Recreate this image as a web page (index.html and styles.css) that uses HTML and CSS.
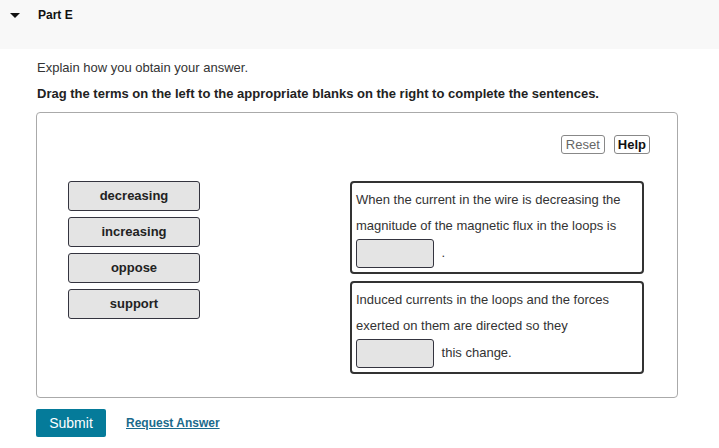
FILE: index.html
```html
<!DOCTYPE html>
<html lang="en">
<head>
    <meta charset="UTF-8">
    <title>Part E</title>
    <link rel="stylesheet" href="styles.css">
</head>
<body>
    <div class="part-header">
        <span class="caret"></span>
        <span class="part-title">Part E</span>
    </div>

    <div class="part-body">
        <p class="prompt">Explain how you obtain your answer.</p>
        <p class="instructions">Drag the terms on the left to the appropriate blanks on the right to complete the sentences.</p>

        <div class="dnd-box">
            <div class="toolbar">
                <button class="tool-btn reset">Reset</button>
                <button class="tool-btn help">Help</button>
            </div>
            <div class="dnd-area">
                <!-- draggable terms -->
                <div class="terms">
                    <div class="term">decreasing</div>
                    <div class="term">increasing</div>
                    <div class="term">oppose</div>
                    <div class="term">support</div>
                </div>
                <!-- sentences with drop targets -->
                <div class="sentences">
                    <div class="sentence">
                        When the current in the wire is decreasing the magnitude of the magnetic flux in the loops is
                        <span class="blank"></span> .
                    </div>
                    <div class="sentence">
                        Induced currents in the loops and the forces exerted on them are directed so they
                        <span class="blank"></span> this change.
                    </div>
                </div>
            </div>
        </div>

        <div class="actions">
            <button class="submit">Submit</button>
            <a href="#" class="request">Request Answer</a>
        </div>
    </div>
</body>
</html>
```

FILE: styles.css
```css
body {
    margin: 0;
    padding: 0;
    font-family: Arial, "Liberation Sans", sans-serif;
    color: #222;
    background: #fff;
}
.part-header {
    height: 49px;
    background-color: #f8f8f8;
    display: flex;
    align-items: flex-start;
    padding-top: 8px;
    box-sizing: border-box;
}
.caret {
    width: 0;
    height: 0;
    border-left: 5px solid transparent;
    border-right: 5px solid transparent;
    border-top: 5px solid #111;
    margin: 5px 0 0 10px;
}
.part-title {
    font-size: 12px;
    font-weight: bold;
    color: #111;
    margin-left: 18px;
    line-height: 14px;
}
.part-body {
    padding: 0 41px 0 36px;
}
.prompt {
    font-size: 13px;
    margin: 12px 0 0 1px;
    line-height: 14px;
    color: #333;
}
.instructions {
    font-size: 13px;
    font-weight: bold;
    margin: 11px 0 0 1px;
    line-height: 16px;
    color: #222;
}
.dnd-box {
    margin-top: 10px;
    border: 1px solid #aaa;
    border-radius: 4px;
    height: 286px;
    box-sizing: border-box;
    padding: 22px 27px 0 31px;
}
.toolbar {
    display: flex;
    justify-content: flex-end;
    gap: 9px;
}
.tool-btn {
    font-family: Arial, "Liberation Sans", sans-serif;
    font-size: 13px;
    height: 19px;
    padding: 0 4px;
    background: #fff;
    border: 1px solid #888;
    border-radius: 3px;
    line-height: 17px;
}
.reset {
    color: #666;
}
.help {
    color: #111;
    font-weight: bold;
    padding: 0 3px;
}
.dnd-area {
    display: flex;
    justify-content: space-between;
    margin-top: 27px;
}
.terms {
    display: flex;
    flex-direction: column;
    gap: 6px;
    width: 132px;
}
.term {
    height: 30px;
    box-sizing: border-box;
    background-color: #e4e4e4;
    border: 1px solid #34343f;
    border-radius: 3px;
    font-size: 13px;
    font-weight: bold;
    color: #222;
    text-align: center;
    line-height: 27px;
}
.sentences {
    display: flex;
    flex-direction: column;
    gap: 7px;
    width: 294px;
    margin-right: 6px;
}
.sentence {
    border: 2px solid #333;
    border-radius: 4px;
    padding: 4px 4px 4px 4px;
    font-size: 13px;
    line-height: 26px;
    color: #333;
}
.blank {
    display: inline-block;
    width: 78px;
    height: 29px;
    box-sizing: border-box;
    background-color: #e4e4e4;
    border: 1px solid #34343f;
    border-radius: 3px;
    vertical-align: middle;
    margin: 0 4px 0 0;
}
.actions {
    display: flex;
    align-items: center;
    margin-top: 11px;
    gap: 20px;
}
.submit {
    font-family: Arial, "Liberation Sans", sans-serif;
    background-color: #057b9a;
    color: #fff;
    border: none;
    border-radius: 2px;
    font-size: 14px;
    width: 70px;
    height: 28px;
}
.request {
    color: #1b6a8c;
    font-weight: bold;
    font-size: 12px;
    text-decoration: underline;
}
```
